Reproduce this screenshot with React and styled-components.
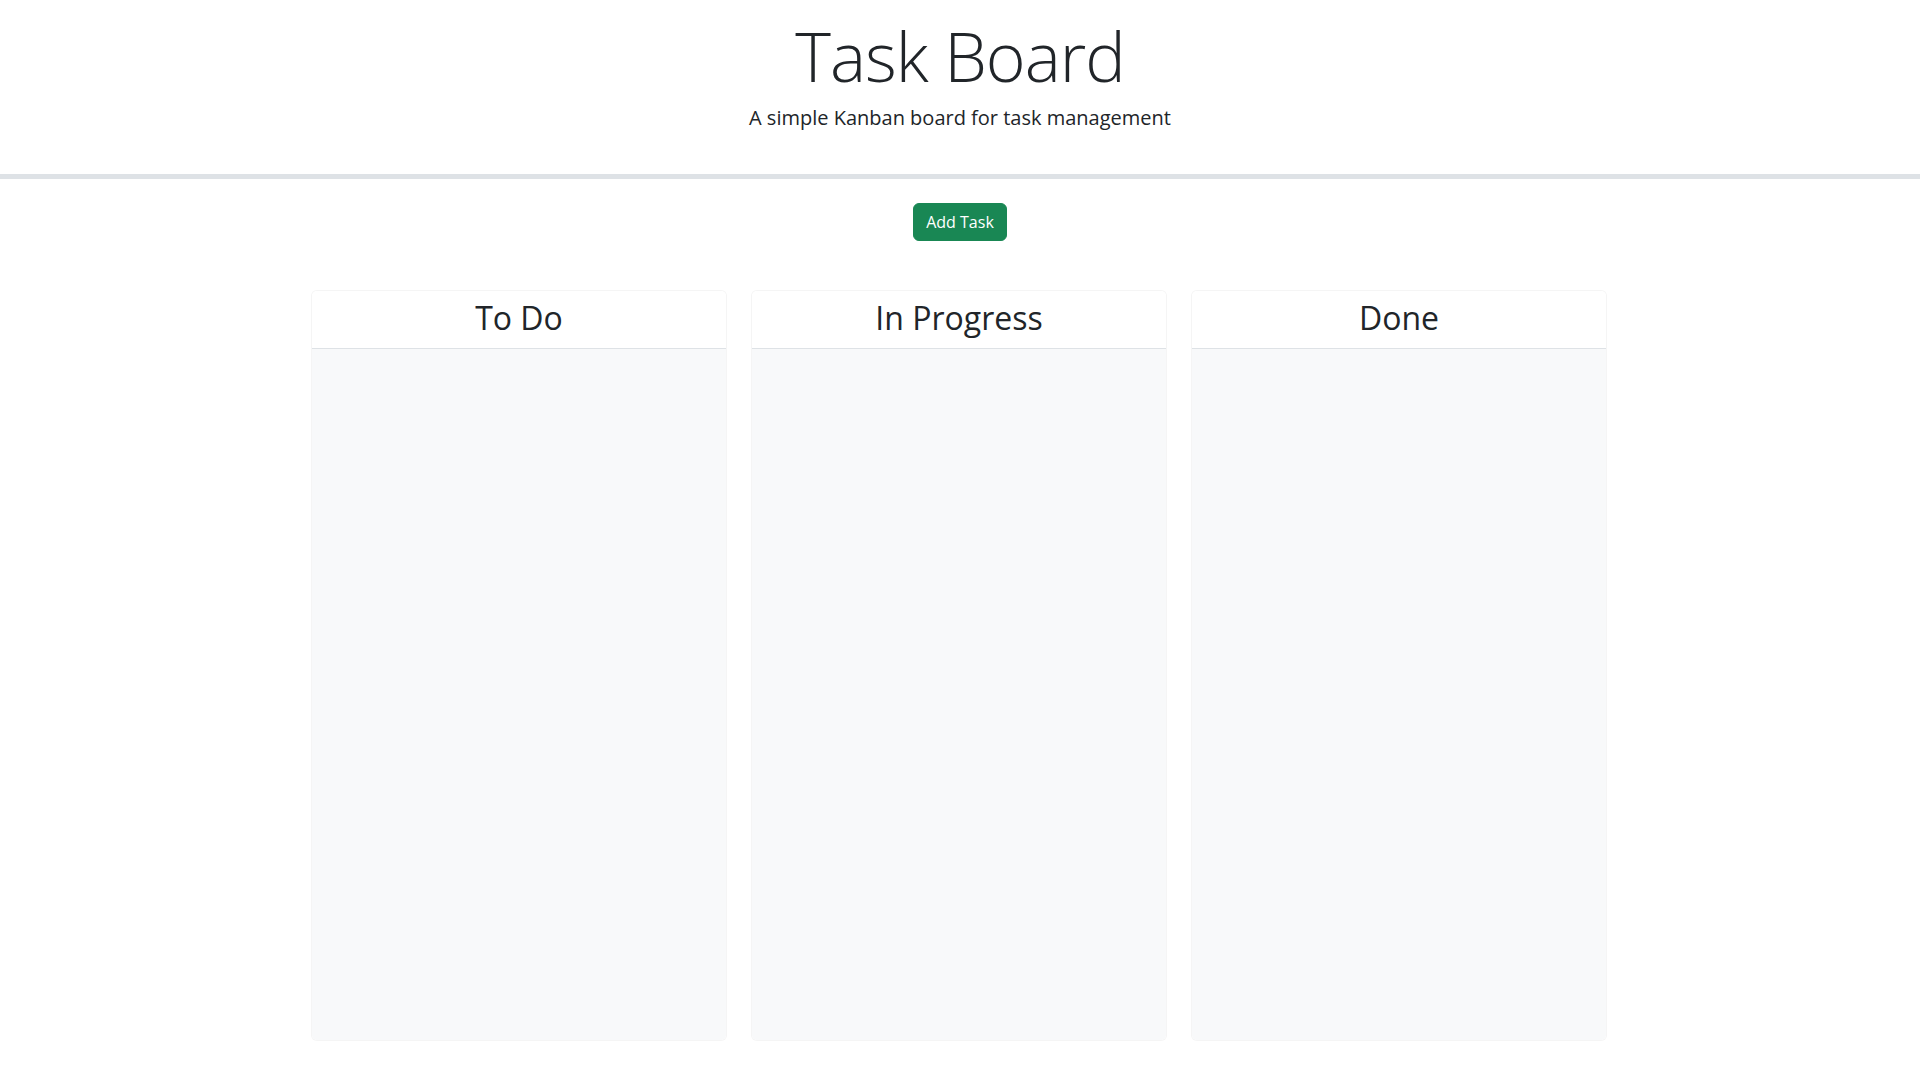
import React from 'react';
import styled, { createGlobalStyle } from 'styled-components';

const COLUMNS = ['To Do', 'In Progress', 'Done'];

const GlobalStyle = createGlobalStyle`
	* {
		box-sizing: border-box;
	}
	body {
		margin: 0;
		background: #fff;
		color: #212529;
		font-family: 'Open Sans', 'Segoe UI', Roboto, sans-serif;
		font-size: 16px;
	}
`;

const App = () => (
	<>
		<GlobalStyle />
		<Header>
			<Title>Task Board</Title>
			<Lead>A simple Kanban board for task management</Lead>
		</Header>
		<Toolbar>
			<AddButton type="button">Add Task</AddButton>
		</Toolbar>
		<Board>
			{COLUMNS.map(name => (
				<Column key={name}>
					<ColumnHeader>
						<ColumnTitle>{name}</ColumnTitle>
					</ColumnHeader>
					<ColumnBody />
				</Column>
			))}
		</Board>
	</>
);

const Header = styled.header`
	padding: 14px 0 41px;
	text-align: center;
	border-bottom: 5px solid #dee2e6;
`;

const Title = styled.h1`
	margin: 0;
	font-size: 68px;
	font-weight: 300;
	line-height: 84px;
	letter-spacing: -1px;
`;

const Lead = styled.p`
	margin: 5px 0 0;
	font-size: 20px;
	font-weight: 400;
	line-height: 30px;
	color: #212529;
`;

const Toolbar = styled.div`
	display: flex;
	justify-content: center;
	padding-top: 24px;
`;

const AddButton = styled.button`
	height: 38px;
	padding: 6px 12px;
	font-family: inherit;
	font-size: 16px;
	line-height: 24px;
	color: #fff;
	background-color: #198754;
	border: 1px solid #198754;
	border-radius: 6px;
	cursor: pointer;
`;

const Board = styled.main`
	display: grid;
	grid-template-columns: repeat(3, 416px);
	justify-content: center;
	column-gap: 24px;
	margin-top: 49px;
	padding-right: 2px;
`;

const Column = styled.section`
	display: flex;
	flex-direction: column;
	height: 751px;
	border: 1px solid rgba(0, 0, 0, 0.04);
	border-radius: 6px;
	overflow: hidden;
	background: #fff;
`;

const ColumnHeader = styled.div`
	padding: 6px 16px 10px;
	text-align: center;
	background: #fff;
	border-bottom: 1px solid #dee2e6;
`;

const ColumnTitle = styled.h2`
	margin: 0;
	font-size: 32px;
	font-weight: 400;
	line-height: 41px;
`;

const ColumnBody = styled.div`
	flex: 1;
	background: #f8f9fa;
`;

export default App;
